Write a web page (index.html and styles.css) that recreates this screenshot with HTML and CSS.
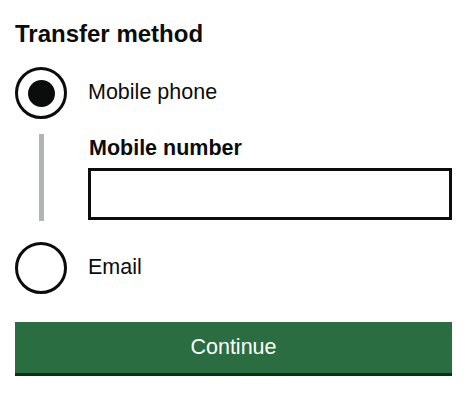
FILE: index.html
```html
<!DOCTYPE html>
<html lang="en">
<head>
<meta charset="utf-8">
<title>Transfer method</title>
<link rel="stylesheet" href="styles.css">
</head>
<body>
<main class="page">
  <fieldset class="fieldset">
    <legend class="heading">Transfer method</legend>
    <div class="radio-row">
      <span class="radio radio--checked"><span class="radio-dot"></span></span>
      <span class="radio-label">Mobile phone</span>
    </div>
    <div class="conditional">
      <label class="field-label" for="mobile">Mobile number</label>
      <input class="input" id="mobile" type="tel">
    </div>
    <div class="radio-row">
      <span class="radio"></span>
      <span class="radio-label">Email</span>
    </div>
  </fieldset>
  <button class="button" type="button">Continue</button>
</main>
</body>
</html>
```

FILE: styles.css
```css
html, body {
  margin: 0;
  padding: 0;
  background: #ffffff;
}

body {
  font-family: "Liberation Sans", Arial, sans-serif;
  color: #0b0c0c;
}

.page {
  padding: 22px 22px 0 15px;
  display: flex;
  flex-direction: column;
}

.fieldset {
  border: 0;
  margin: 0;
  padding: 0;
  min-width: 0;
  display: flex;
  flex-direction: column;
}

.heading {
  padding: 0;
  margin: 0;
  font-size: 24px;
  line-height: 24px;
  font-weight: 700;
  height: 24px;
  float: left;
  width: 100%;
}

.radio-row {
  display: flex;
  align-items: center;
  gap: 21px;
  height: 52px;
}

.radio-row:first-of-type {
  margin-top: 21px;
}

.radio {
  box-sizing: border-box;
  width: 52px;
  height: 52px;
  border: 3px solid #0b0c0c;
  border-radius: 50%;
  display: flex;
  align-items: center;
  justify-content: center;
  flex: none;
}

.radio-dot {
  width: 27px;
  height: 27px;
  border-radius: 50%;
  background: #0b0c0c;
}

.radio-label {
  font-size: 21.5px;
  line-height: 21.5px;
}

.conditional {
  margin: 15px 0 21px 24px;
  border-left: 5px solid #b1b4b6;
  padding: 4px 0 1px 44px;
  display: flex;
  flex-direction: column;
}

.field-label {
  font-size: 21.5px;
  line-height: 21.5px;
  font-weight: 700;
  margin: 0 0 8.5px 1px;
}

.input {
  box-sizing: border-box;
  height: 52px;
  width: 364px;
  border: 3px solid #0b0c0c;
  border-radius: 0;
  margin: 0;
  padding: 0 8px;
  font-family: inherit;
  font-size: 21.5px;
  background: #ffffff;
}

.button {
  margin-top: 28px;
  height: 54px;
  width: 437px;
  border: 0;
  border-bottom: 3px solid #0b2e19;
  border-radius: 0;
  background: #2a6d41;
  color: #ffffff;
  font-family: inherit;
  font-size: 21.5px;
  line-height: 21.5px;
  padding: 1px 0 0;
  display: flex;
  align-items: center;
  justify-content: center;
}
```
